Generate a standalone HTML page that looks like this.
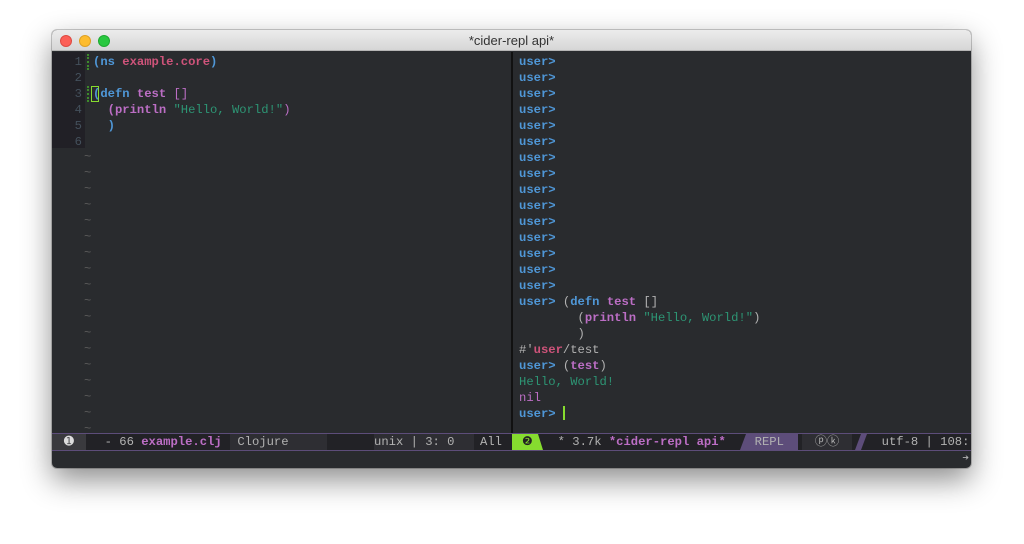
<!DOCTYPE html>
<html><head><meta charset="utf-8"><style>
*{margin:0;padding:0;box-sizing:border-box}
body{width:1024px;height:544px;background:#fff;position:relative;overflow:hidden;font-family:"Liberation Mono","DejaVu Sans Mono",monospace;}
.win{position:absolute;left:52px;top:30px;width:919px;height:438px;background:#292b2e;border-radius:5px;overflow:hidden;box-shadow:0 12px 30px rgba(0,0,0,.45),0 0 0 1px rgba(0,0,0,.2)}
.title{position:absolute;left:0;top:0;width:919px;height:21px;background:linear-gradient(#ececec,#d6d6d6);border-bottom:1px solid #b5b5b5;font:13px "Liberation Sans",sans-serif;color:#333;text-align:center;line-height:21px}
.dot{position:absolute;top:5px;width:12px;height:12px;border-radius:50%}
.pane{position:absolute;top:24px;height:379px;overflow:hidden;font-size:12.2px;line-height:16px;color:#b2b2b2;white-space:pre}
.l{height:16px}
.kw{color:#4f97d7;font-weight:bold}
.fn{color:#bc6ec5;font-weight:bold}
.ns{color:#ce537a;font-weight:bold}
.st{color:#2d9574}
.ti{color:#5b5b5b}
.ln{position:absolute;left:0;top:22px;width:33px;height:96px;background:#212026;color:#44505c;font-size:12.2px;line-height:16px;text-align:right;padding-right:3px;padding-top:2px;white-space:pre}
.ml{position:absolute;top:403px;height:18px;border-top:1px solid #5d4d7a;border-bottom:1px solid #5d4d7a;font-size:12.2px;line-height:16px;color:#b2b2b2;white-space:pre;background:#222226}
.seg{position:absolute;top:0;height:16px}
</style></head><body>
<div class="win">
<div class="title">*cider-repl api*
<div class="dot" style="left:8px;background:#fc5f57;border:1px solid #de4a42"></div>
<div class="dot" style="left:27px;background:#fdbc2e;border:1px solid #dea024"></div>
<div class="dot" style="left:46px;background:#29c840;border:1px solid #1ea931"></div>
</div>
<div class="ln">1
2
3
4
5
6</div>
<div style="position:absolute;left:35px;top:24px;width:3px;height:16px;border-left:2px dotted #3d8a2b"></div>
<div style="position:absolute;left:35px;top:56px;width:3px;height:16px;border-left:2px dotted #3d8a2b"></div>
<div style="position:absolute;left:39px;top:56px;width:8px;height:16px;border:1px solid #86dc2f"></div>
<div class="pane" style="left:41px;width:420px"><div class="l"><span class="kw">(ns</span> <span class="ns">example.core</span><span class="kw">)</span></div><div class="l"></div><div class="l"><span class="kw">(defn</span> <span class="fn">test</span> <span style="color:#bc6ec5">[]</span></div><div class="l">  <span class="fn">(println</span> <span class="st">"Hello, World!"</span><span style="color:#bc6ec5">)</span></div><div class="l">  <span class="kw">)</span></div><div class="l"></div></div>
<div class="pane ti" style="left:32px;top:119px">~
~
~
~
~
~
~
~
~
~
~
~
~
~
~
~
~
~</div>
<div style="position:absolute;left:459px;top:22px;width:2px;height:381px;background:#111"></div>
<div class="pane" style="left:467px;width:450px"><div class="l"><span class="kw">user&gt;</span></div><div class="l"><span class="kw">user&gt;</span></div><div class="l"><span class="kw">user&gt;</span></div><div class="l"><span class="kw">user&gt;</span></div><div class="l"><span class="kw">user&gt;</span></div><div class="l"><span class="kw">user&gt;</span></div><div class="l"><span class="kw">user&gt;</span></div><div class="l"><span class="kw">user&gt;</span></div><div class="l"><span class="kw">user&gt;</span></div><div class="l"><span class="kw">user&gt;</span></div><div class="l"><span class="kw">user&gt;</span></div><div class="l"><span class="kw">user&gt;</span></div><div class="l"><span class="kw">user&gt;</span></div><div class="l"><span class="kw">user&gt;</span></div><div class="l"><span class="kw">user&gt;</span></div><div class="l"><span class="kw">user&gt;</span> (<span class="kw">defn</span> <span class="fn">test</span> []</div><div class="l">        (<span class="fn">println</span> <span class="st">"Hello, World!"</span>)</div><div class="l">        )</div><div class="l">#'<span class="ns">user</span>/test</div><div class="l"><span class="kw">user&gt;</span> (<span class="fn">test</span>)</div><div class="l"><span class="st">Hello, World!</span></div><div class="l"><span style="color:#bc6ec5">nil</span></div><div class="l"><span class="kw">user&gt;</span> <span style="display:inline-block;width:2px;height:14px;background:#86dc2f;vertical-align:-3px"></span></div><div class="l ti" style="margin-left:-8px">~</div></div>
<div class="ml" style="left:0;width:460px">
<div class="seg" style="left:0;width:34px;background:#3a3a3e;color:#ddd;text-align:center">➊</div>
<div class="seg" style="left:38px;width:140px;background:#222226">  - 66 <span class="fn">example.clj</span></div>
<div class="seg" style="left:178px;width:97px;background:#2e2e33"> Clojure</div>
<div class="seg" style="left:322px;width:100px;background:#2e2e33">unix | 3: 0</div>
<div class="seg" style="left:428px;width:32px;background:#222226">All</div>
</div>
<div class="ml" style="left:460px;width:459px">
<div class="seg" style="left:0;width:31px;background:#86dc2f;color:#222;text-align:center;clip-path:polygon(0 0,26px 0,31px 100%,0 100%)">❷</div>
<div class="seg" style="left:31px;width:194px">  * 3.7k <span class="fn">*cider-repl api*</span></div>
<div class="seg" style="left:228px;width:58px;background:#5d4d7a;color:#b2b2b2;clip-path:polygon(6px 0,100% 0,100% 100%,0 100%)">  REPL</div>
<div class="seg" style="left:290px;width:50px;background:#2e2e33;text-align:center">ⓟⓚ</div>
<div class="seg" style="left:343px;width:12px;background:#5d4d7a;clip-path:polygon(6px 0,100% 0,6px 100%,0 100%)"></div>
<div class="seg" style="left:355px;width:104px;background:#222226">  utf-8 | 108: 6</div>
</div>
<div style="position:absolute;right:2px;top:421px;font-size:11px;color:#b2b2b2">➔</div>
</div>
</body></html>
